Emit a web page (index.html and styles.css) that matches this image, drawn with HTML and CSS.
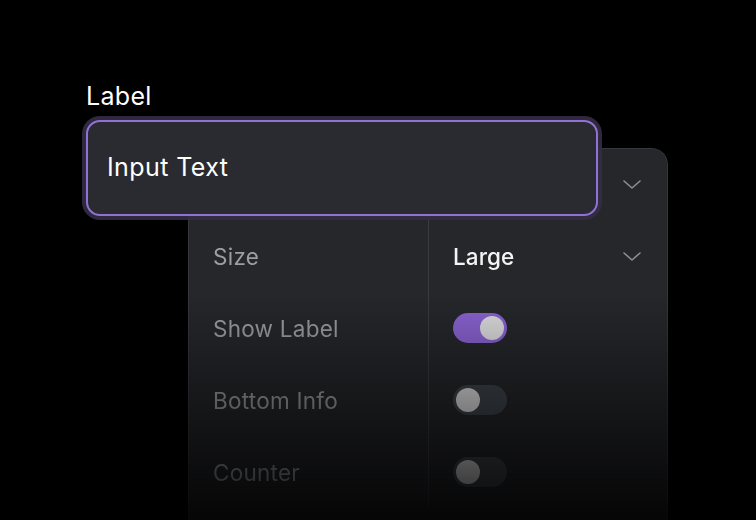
FILE: index.html
```html
<!DOCTYPE html>
<html lang="en">
<head>
<meta charset="utf-8">
<title>Input settings</title>
<link rel="stylesheet" href="styles.css">
</head>
<body>
<div class="stage">
  <div class="panel">
    <div class="row">
      <div class="key"></div>
      <div class="val"><span class="val-text"></span>
        <svg class="chev" viewBox="0 0 18 9" aria-hidden="true"><path d="M1 1 L9 8 L17 1"/></svg>
      </div>
    </div>
    <div class="row">
      <div class="key">Size</div>
      <div class="val"><span class="val-text">Large</span>
        <svg class="chev" viewBox="0 0 18 9" aria-hidden="true"><path d="M1 1 L9 8 L17 1"/></svg>
      </div>
    </div>
    <div class="row">
      <div class="key">Show Label</div>
      <div class="val"><span class="toggle on"><span class="knob"></span></span></div>
    </div>
    <div class="row">
      <div class="key">Bottom Info</div>
      <div class="val"><span class="toggle"><span class="knob"></span></span></div>
    </div>
    <div class="row">
      <div class="key">Counter</div>
      <div class="val"><span class="toggle"><span class="knob"></span></span></div>
    </div>
  </div>

  <div class="field">
    <div class="field-label">Label</div>
    <div class="field-input">Input Text</div>
  </div>
</div>
</body>
</html>
```

FILE: styles.css
```css
* { box-sizing: border-box; }

html, body {
  margin: 0;
  padding: 0;
  background: #000;
}

body {
  width: 756px;
  height: 520px;
  overflow: hidden;
  font-family: Inter, "Noto Sans", sans-serif;
  color: #fff;
}

.stage {
  position: relative;
  width: 756px;
  height: 520px;
  padding: 148px 0 0 188px;
}

.panel {
  width: 480px;
  height: 380px;
  background: #26272b;
  border: 1px solid #36373c;
  border-bottom: none;
  border-radius: 16px 16px 0 0;
  display: flex;
  flex-direction: column;
  -webkit-mask-image: linear-gradient(to bottom, #000 146px, rgba(0,0,0,0.14) 372px);
  mask-image: linear-gradient(to bottom, #000 146px, rgba(0,0,0,0.14) 372px);
}

.row {
  height: 72px;
  flex: none;
  display: grid;
  grid-template-columns: 240px 1fr;
}

.row:first-child { height: 71px; }

.key {
  display: flex;
  align-items: center;
  padding-left: 24px;
  border-right: 1px solid #3a3b40;
  font-size: 22.5px;
  letter-spacing: 0.25px;
  color: #9d9ea2;
}

.val {
  display: flex;
  align-items: center;
  justify-content: space-between;
  padding: 0 26px 0 24px;
}

.val-text {
  font-size: 22.5px;
  font-weight: 500;
  letter-spacing: 0.1px;
  color: #f4f4f5;
}

.chev {
  width: 18px;
  height: 9px;
  fill: none;
  stroke: #8e8f93;
  stroke-width: 1.6;
  stroke-linecap: round;
  stroke-linejoin: round;
}

.toggle {
  width: 54px;
  height: 30px;
  border-radius: 15px;
  background: #3f454c;
  padding: 3px;
  display: flex;
  justify-content: flex-start;
}

.toggle.on {
  background: #8a63d2;
  justify-content: flex-end;
}

.knob {
  width: 24px;
  height: 24px;
  border-radius: 50%;
  background: #e2e2e4;
}

.toggle.on .knob { background: #dddcdf; }

.field {
  position: absolute;
  left: 86px;
  top: 81px;
  width: 512px;
  display: flex;
  flex-direction: column;
  gap: 9px;
}

.field-label {
  font-size: 25px;
  line-height: 30px;
  letter-spacing: 0.3px;
  color: #fff;
}

.field-input {
  height: 96px;
  display: flex;
  align-items: center;
  padding-left: 19px;
  padding-bottom: 2px;
  background: #2a2b30;
  border: 2px solid #9271d6;
  border-radius: 14px;
  box-shadow: 0 0 0 4px rgba(52, 45, 68, 0.9);
  font-size: 25px;
  letter-spacing: 0.4px;
  color: #fff;
}
```
